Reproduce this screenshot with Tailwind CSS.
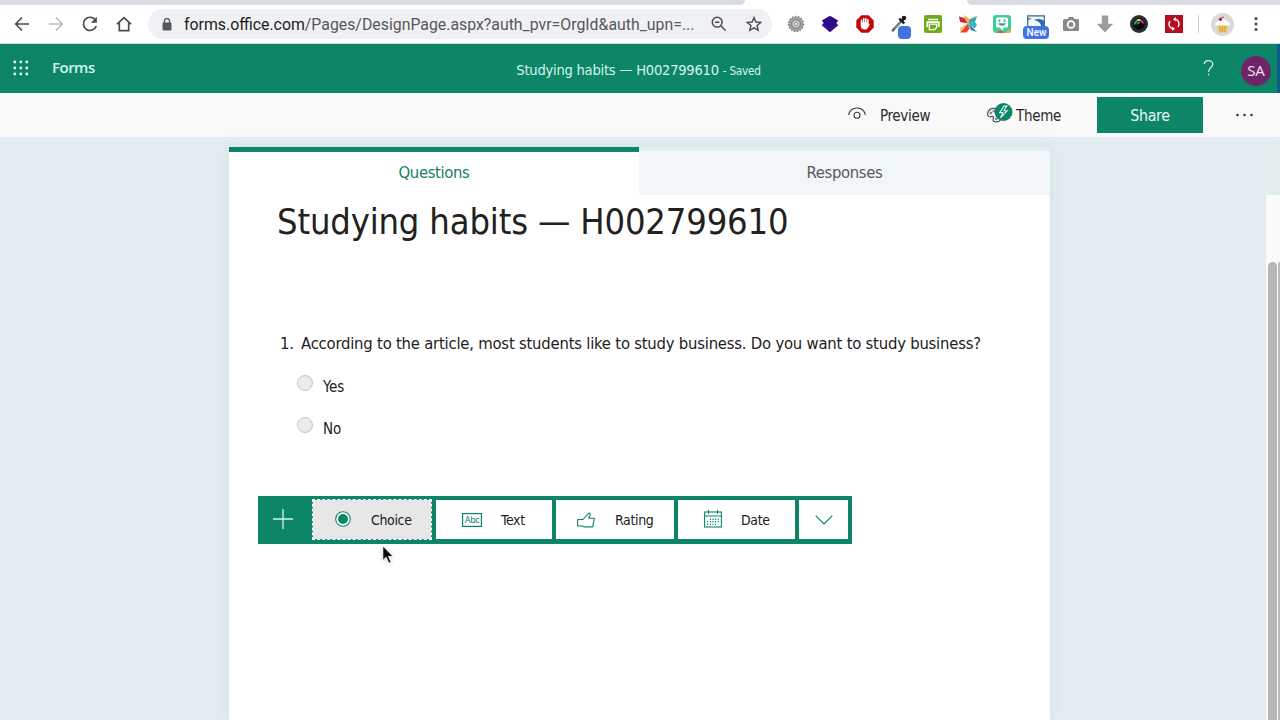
<!DOCTYPE html>
<html lang="en">
<head>
    <meta charset="UTF-8">
    <meta name="viewport" content="width=device-width, initial-scale=1.0">
    <title>Studying habits - Microsoft Forms</title>
    <script src="https://cdn.jsdelivr.net/npm/@tailwindcss/browser@4"></script>
    <style>
        body {
            font-family: 'DejaVu Sans Condensed', 'DejaVu Sans', sans-serif;
        }
    </style>
</head>
<body class="w-[1280px] h-[720px] overflow-hidden flex flex-col bg-[#e4ecf2] text-[#212121]">
    <!-- Browser toolbar -->
    <div class="h-11 shrink-0 bg-white border-b border-[#cfd8d6] flex flex-col">
        <div class="h-[5px] flex justify-between">
            <div class="w-[745px] bg-[#d9dce3] rounded-br-lg"></div>
            <div class="w-[313px] bg-[#d9dce3] rounded-bl-lg"></div>
        </div>
        <div class="flex-1 flex items-center">
            <div class="flex items-center gap-4 pl-[13px]">
                <svg class="w-[18px] h-[18px]" viewBox="0 0 18 18" fill="none" stroke="#4a4c50" stroke-width="1.6"><path d="M16 9H3M9 2.5L2.7 9L9 15.5"/></svg>
                <svg class="w-[18px] h-[18px]" viewBox="0 0 18 18" fill="none" stroke="#b9bbbe" stroke-width="1.5"><path d="M2 9h13M9 2.5L15.3 9L9 15.5"/></svg>
                <svg class="w-[18px] h-[18px]" viewBox="0 0 18 18" fill="none" stroke="#4a4c50" stroke-width="1.7"><path d="M14.7 5.4A6.6 6.6 0 1 0 15.3 11"/><path d="M15.9 1.8v6h-6z" fill="#4a4c50" stroke="none"/></svg>
                <svg class="w-[18px] h-[18px]" viewBox="0 0 18 18" fill="none" stroke="#4a4c50" stroke-width="1.7"><path d="M2 9.2L9 2.6L16 9.2M4.3 8v7.6h9.4V8"/></svg>
            </div>
            <div class="ml-[15px] w-[624px] h-[30px] rounded-full bg-[#f0f1f4] flex items-center" style="font-family: Roboto, sans-serif">
                <svg class="ml-[14px] w-[10px] h-[13px]" viewBox="0 0 10 13"><rect x=".5" y="4.5" width="9" height="8" rx="1" fill="#55585d"/><path d="M2.4 5V3.2a2.6 2.6 0 0 1 5.2 0V5" fill="none" stroke="#55585d" stroke-width="1.4"/></svg>
                <p class="ml-3 w-[520px] pt-px text-[15.85px] text-[#55585d] whitespace-nowrap"><span class="text-[#1b1c1e]">forms.office.com</span>/Pages/DesignPage.aspx?auth_pvr=OrgId&amp;auth_upn=...</p>
                <svg class="ml-[7px] w-4 h-4" viewBox="0 0 16 16" fill="none" stroke="#4a4c50" stroke-width="1.5"><circle cx="6.2" cy="6.2" r="4.9"/><path d="M10 10l4.5 4.5M4 6.2h4.4"/></svg>
                <svg class="ml-[19px] w-4 h-4" viewBox="0 0 16 16" fill="none" stroke="#4a4c50" stroke-width="1.4"><path d="M8 1.6l1.9 4.4 4.8.4-3.6 3.2 1.1 4.7L8 11.8l-4.2 2.5 1.1-4.7L1.3 6.4l4.8-.4z"/></svg>
            </div>

            <!-- Extensions -->
            <div class="ml-[7px] w-[412px] grid grid-cols-12 justify-items-center items-center">
                <svg class="w-[18px] h-[18px]" viewBox="0 0 18 18"><circle cx="9" cy="9" r="7.3" fill="#a5a5a5" stroke="#858585" stroke-width="1.8" stroke-dasharray="1.7 1.3"/><circle cx="9" cy="9" r="4.4" fill="#c9c9c9" stroke="#777"/><circle cx="9" cy="9" r="1.7" fill="#eee" stroke="#808080" stroke-width=".8"/></svg>
                <svg class="w-[18px] h-[18px]" viewBox="0 0 18 18"><path d="M9 .8l8.5 5-1.8 1.3v1.8l1.8 1L9 17.2.5 9.9l1.8-1V7.1L.5 5.8z" fill="#2c0787"/><path d="M2.5 9.5L9 14l6.5-4.5" stroke="#4a25ad" stroke-width=".6" fill="none"/></svg>
                <svg class="w-[18px] h-[18px]" viewBox="0 0 18 18"><path d="M5.4.3h7.2l5.1 5.1v7.2l-5.1 5.1H5.4L.3 12.6V5.4z" fill="#c3060d"/><path d="M5.6 9V5.2M7.7 8.5V3.9M9.8 8.5V3.7M11.9 8.5V4.8" stroke="#fff" stroke-width="1.6" stroke-linecap="round"/><path d="M4.8 7.5v3.3c0 2.5 1.5 3.8 3.8 3.8 2.2 0 3.3-1.1 4.6-3.9.4-.9.5-1.7-.2-1.9-.6-.2-1 .3-1.2.9V7.5z" fill="#fff"/></svg>
                <div class="relative w-[18px] h-[18px]">
                    <svg class="w-[18px] h-[18px]" viewBox="0 0 18 18"><path d="M11 6.5l-6.5 7-2.3 2.8" fill="none" stroke="#456257" stroke-width="2.4"/><path d="M10.5 7l-6 6.5" stroke="#a8bdb5" stroke-width=".8"/><path d="M9.3 3.6l5 4.9M12 6l2.5-3" stroke="#16191b" stroke-width="2.4"/><circle cx="14" cy="3" r="2.3" fill="#16191b"/></svg>
                    <span class="absolute left-2 top-[11px] w-[13px] h-[13px] rounded-sm bg-[#3f73e6]"></span>
                </div>
                <svg class="w-[18px] h-[18px]" viewBox="0 0 18 18"><rect width="18" height="18" rx="2" fill="#70ab1c"/><path d="M4 4.5h10M3.2 12V7.2h11.6V12" fill="none" stroke="#fff" stroke-width="1.7"/><path d="M5.3 9.2h7.4v3.3l-2.2 2.2H5.3z" fill="#70ab1c" stroke="#fff" stroke-width="1.3"/></svg>
                <svg class="w-[18px] h-[18px]" viewBox="0 0 18 18"><path d="M0 1.5l5.5 1.5L9 8.5 1 7z" fill="#cf2546"/><path d="M5 0l6 4.5L9 8.5 5.5 3z" fill="#f0b53a"/><path d="M18 1l-2 6-7 1.5L11 4z" fill="#3fa79f"/><path d="M9 8.5l7-1.5 2 3-2.5 3.5z" fill="#35b6bd"/><path d="M9 8.5L18 17l-6-2z" fill="#2f6fa5"/><path d="M9 8.5l1.5 5.5-3 3.5L1 17.5z" fill="#ea4335"/><path d="M9 8.5L1.5 12.5.5 17z" fill="#f3c63c"/></svg>
                <svg class="w-[18px] h-[18px]" viewBox="0 0 18 18"><rect width="18" height="18" rx="3" fill="#3fcd9a"/><path d="M11 18l7-4v1a3 3 0 0 1-3 3z" fill="#f1a83a"/><path d="M4 17l4-2 3 3H5z" fill="#e3524f"/><path d="M4.5 2.5h9q1.5 0 1.5 1.5v7q0 1.5-1.5 1.5H11L9 15.5 7 12.5H4.5Q3 12.5 3 11V4q0-1.5 1.5-1.5z" fill="#fff"/><path d="M6.5 4.5v2.3M11.5 4.5v2.3" stroke="#27a97c" stroke-width="1.7"/><path d="M5.2 8.3h7.6c-.4 3.3-7.2 3.3-7.6 0z" fill="#27a97c"/></svg>
                <div class="relative w-[18px] h-[18px]">
                    <svg class="w-[18px] h-[18px]" viewBox="0 0 18 18"><path d="M.7 11V.9h16.6V11" fill="#f4f8fb" stroke="#2d6792" stroke-width="1.2"/><path d="M7 5c3-1.5 7-1.5 10 1V11h-3c0-3-3-5-7-6z" fill="#2d6ea5"/><path d="M1 3h4l-4 3z" fill="#5f93b8"/></svg>
                    <span class="absolute -left-1 top-[11px] w-[26px] h-[13px] rounded-sm bg-[#3f73e6] text-white text-[10px] leading-[14px] text-center font-medium" style="font-family: Roboto, sans-serif">New</span>
                </div>
                <svg class="w-[18px] h-[18px]" viewBox="0 0 18 18"><path d="M2.5 4h3l1.3-2h4.4l1.3 2h3A1.5 1.5 0 0 1 17 5.5v9a1.5 1.5 0 0 1-1.5 1.5h-13A1.5 1.5 0 0 1 1 14.5v-9A1.5 1.5 0 0 1 2.5 4z" fill="#87898b"/><circle cx="9" cy="9.5" r="3.4" fill="none" stroke="#fff" stroke-width="1.8"/></svg>
                <svg class="w-[18px] h-[18px]" viewBox="0 0 18 18"><path d="M5.8.5h6.4v8.2h5L9 17.5.8 8.7h5z" fill="#9c9c9c"/></svg>
                <svg class="w-[18px] h-[18px]" viewBox="0 0 18 18"><circle cx="9" cy="9" r="9" fill="#2b2d31"/><circle cx="9" cy="9" r="5.8" fill="#0a0a0c"/><path d="M5.2 9.5A4.2 4.2 0 0 1 7 5.5" stroke="#36b54a" stroke-width="2" fill="none"/><path d="M7 5.5a4 4 0 0 1 3.7-.2" stroke="#e5dc3c" stroke-width="2" fill="none"/><path d="M10.7 5.3a4 4 0 0 1 2.3 3.2" stroke="#d7358b" stroke-width="2" fill="none"/><path d="M7.5 9.5a2 2 0 0 1 2.5-2" stroke="#329fd9" stroke-width="1.3" fill="none"/></svg>
                <svg class="w-[18px] h-[18px]" viewBox="0 0 18 18"><rect width="18" height="18" fill="#b40d20"/><path d="M7.5 13.8A5 5 0 0 1 5 6M10.5 4.2A5 5 0 0 1 13 12" fill="none" stroke="#fff" stroke-width="1.4"/><path d="M10.8 1.9v4.5L8 4.2zM7.2 11.6v4.5L10 13.8z" fill="#fff"/></svg>
            </div>
            <div class="ml-[7px] w-px h-[18px] bg-[#cfd1d4]"></div>
            <svg class="ml-3 w-[23px] h-[23px]" viewBox="0 0 23 23"><circle cx="11.5" cy="11.5" r="11.5" fill="#d9d9d9"/><path d="M6 12h11l-1.8 7.5H7.8z" fill="#f0c25a"/><path d="M8.8 13l.8 6M11.5 13v6M14.2 13l-.8 6" stroke="#d9973a" stroke-width=".8"/><path d="M4.5 12.5c-1-3 1-4 2.5-4.3C8 5.5 14.5 5.3 16 8.2c2 .3 3.5 2 2.5 4.3z" fill="#fffdf8"/><circle cx="9.5" cy="6.3" r="1.6" fill="#a51e2b"/><path d="M9.8 5.5c1-1.3 2-1.3 3.2-1.3" stroke="#8d2530" stroke-width=".8" fill="none"/></svg>
            <svg class="ml-5 w-1 h-4" viewBox="0 0 4 16" fill="#4a4c50"><circle cx="2" cy="2.5" r="1.6"/><circle cx="2" cy="8" r="1.6"/><circle cx="2" cy="13.5" r="1.6"/></svg>
        </div>
    </div>

    <!-- Forms header -->
    <header class="h-[49px] shrink-0 bg-[#0d8567] text-[#d5f5ec] border-r-[3px] border-[#0b5e87] flex items-center">
        <div class="flex-1 flex items-center">
            <svg class="ml-[13px] -mt-0.5 w-4 h-4" viewBox="0 0 16 16" fill="#e4fbf4"><circle cx="1.8" cy="2" r="1.4"/><circle cx="7.8" cy="2" r="1.4"/><circle cx="13.8" cy="2" r="1.4"/><circle cx="1.8" cy="8" r="1.4"/><circle cx="7.8" cy="8" r="1.4"/><circle cx="13.8" cy="8" r="1.4"/><circle cx="1.8" cy="14" r="1.4"/><circle cx="7.8" cy="14" r="1.4"/><circle cx="13.8" cy="14" r="1.4"/></svg>
            <span class="ml-[23px] -mt-0.5 text-[15px] tracking-[-0.5px] font-semibold" style="font-family: 'Open Sans', sans-serif">Forms</span>
        </div>
        <p class="text-[14.6px] tracking-[-0.24px] whitespace-nowrap pt-0.5">Studying habits — H002799610 <span class="text-[11.7px]">- Saved</span></p>
        <div class="flex-1 flex items-center justify-end">
            <svg class="mr-[27px] -mt-0.5 w-[11px] h-4" viewBox="0 0 11 16" fill="none" stroke="#d5f5ec" stroke-width="1.2"><path d="M1.2 4.2C1.5 2 3.3.7 5.5.7c2.5 0 4.3 1.4 4.3 3.6C9.8 7.5 5.5 7.6 5.5 12"/><path d="M5.5 13.8v1.6"/></svg>
            <div class="mr-1.5 mt-1 w-[30px] h-[30px] rounded-full bg-[#6f2468] text-[#f1dff0] text-[15px] tracking-[-0.2px] flex items-center justify-center" style="font-family: 'Noto Sans', sans-serif">SA</div>
        </div>
    </header>

    <!-- Command bar -->
    <div class="h-11 shrink-0 bg-[#f9f9f9] flex items-center justify-end text-[15px] tracking-[-0.33px] text-[#2b2b2b]">
        <div class="flex items-center">
            <svg class="-mt-1 w-[18px] h-[13px]" viewBox="0 0 18 13" fill="none" stroke="#3b3b3b" stroke-width="1.1"><path d="M.6 8C1.5 3.6 4.8 1 9 1s7.5 2.6 8.4 7"/><circle cx="9" cy="8.3" r="3"/></svg>
            <span class="ml-3.5 mt-0.5">Preview</span>
        </div>
        <div class="ml-[57px] flex items-center">
            <svg class="-mt-0.5 w-[26px] h-[22px]" viewBox="0 0 26 22"><path d="M9 5.5C4 4.5.6 7.5.6 11c0 2.5 2 3.6 3.9 2.6 1.6-.9 2.5.2 1.7 2-.8 2 .9 3.4 3 3.4 2.3 0 3.8-1 4.8-2.5" fill="none" stroke="#3b3b3b" stroke-width="1.1"/><circle cx="3.8" cy="10" r="1" fill="none" stroke="#3b3b3b" stroke-width=".7"/><circle cx="6.8" cy="8" r="1" fill="none" stroke="#3b3b3b" stroke-width=".7"/><circle cx="9.3" cy="15.8" r="1" fill="none" stroke="#3b3b3b" stroke-width=".7"/><circle cx="16.5" cy="9" r="9" fill="#0d8567"/><path d="M17 3.1l-4.3 6.5h3.1l-2.3 5.2 6.7-7.1h-3.3l3-4.6z" fill="none" stroke="#d9f7ee" stroke-width="1.1"/></svg>
            <span class="ml-[3px] mt-0.5">Theme</span>
        </div>
        <button class="ml-9 -mt-px w-[106px] h-9 pt-0.5 bg-[#0d8567] text-[#e6fbf5] text-[15.8px] tracking-[-0.3px]">Share</button>
        <svg class="ml-[33px] mr-[27px] w-[17px] h-1" viewBox="0 0 17 4" fill="#222"><circle cx="1.5" cy="2" r="1.2"/><circle cx="8.5" cy="2" r="1.2"/><circle cx="15.5" cy="2" r="1.2"/></svg>
    </div>

    <!-- Form canvas -->
    <main class="flex-1 min-h-0 flex justify-between">
        <section class="ml-[229px] mt-2.5 w-[821px] flex flex-col shadow-[0_0_12px_rgba(190,222,215,0.65)]">
            <div class="h-12 shrink-0 flex text-[16.5px] tracking-[-0.35px]">
                <div class="w-[410px] bg-white border-t-[5px] border-[#0d8567] text-[#14805f] flex items-center justify-center">Questions</div>
                <div class="mt-1 flex-1 bg-[#f1f6f9] text-[#54595c] flex items-center justify-center pt-px">Responses</div>
            </div>
            <div class="flex-1 bg-white pl-12">
                <h1 class="pt-1.5 text-4xl leading-[42px] tracking-[-0.17px] text-[#212121]">Studying habits — H002799610</h1>

                <div class="mt-[89px] flex text-[16.5px] tracking-[-0.215px] leading-6">
                    <span class="w-[24px] pl-[3px]">1.</span>
                    <p>According to the article, most students like to study business. Do you want to study business?</p>
                </div>
                <div class="mt-[17px] ml-5 flex flex-col gap-[18px] text-[15px] tracking-[-0.2px] leading-6">
                    <label class="flex gap-2.5"><span class="mt-0.5 w-4 h-4 rounded-full border border-[#c6c6c6] bg-[#ebebeb]"></span><span class="mt-0.5 -mb-0.5">Yes</span></label>
                    <label class="flex gap-2.5"><span class="mt-0.5 w-4 h-4 rounded-full border border-[#c6c6c6] bg-[#ebebeb]"></span><span class="mt-0.5 -mb-0.5">No</span></label>
                </div>

                <!-- Question type picker -->
                <div class="relative mt-[57px] -ml-[19px] w-[594px] h-12 bg-[#0d8567] p-1 pb-[5px] flex gap-1 text-[14px] tracking-[-0.35px]">
                    <div class="w-[46px] pr-1 flex items-center justify-center">
                        <svg class="w-5 h-5 -mt-px" viewBox="0 0 20 20" stroke="#d5f5ec" stroke-width="1.3"><path d="M10 0v20M0 10h20"/></svg>
                    </div>
                    <div class="-my-px w-[120px] bg-[#e7e7e7] bg-clip-padding border border-dashed border-white flex items-center">
                        <svg class="ml-[22px] -mt-px w-4 h-4" viewBox="0 0 16 16"><circle cx="8" cy="8" r="7.3" fill="#fff" stroke="#0d8567" stroke-width="1.1"/><circle cx="8" cy="8" r="5" fill="#0d8567"/></svg>
                        <span class="ml-5 pt-px">Choice</span>
                    </div>
                    <div class="w-[116px] bg-white flex items-center">
                        <svg class="ml-[26px] w-5 h-3.5" viewBox="0 0 20 14"><rect x=".6" y=".6" width="18.8" height="12.8" fill="#fff" stroke="#0d8567" stroke-width="1.2"/><text x="10" y="10.3" text-anchor="middle" textLength="14.5" lengthAdjust="spacingAndGlyphs" font-size="8.5" font-family="Noto Sans" fill="#0d8567">Abc</text></svg>
                        <span class="ml-[19px] pt-px">Text</span>
                    </div>
                    <div class="w-[118px] bg-white flex items-center">
                        <svg class="ml-[21px] w-[18px] h-4" viewBox="0 0 18 16" fill="none" stroke="#0d8567" stroke-width="1.1"><path d="M.6 7.5H6l5.2-5.8c.8-1 2.5-.4 2 1.2L11.8 6.3h5.5l-1.6 8.6H7.2L5.5 14H.6z" stroke-linejoin="round"/></svg>
                        <span class="ml-5 pt-px">Rating</span>
                    </div>
                    <div class="w-[117px] bg-white flex items-center">
                        <svg class="ml-[26px] -mt-0.5 w-[18px] h-[18px]" viewBox="0 0 18 18" fill="none" stroke="#0d8567" stroke-width="1.1"><rect x=".6" y="2" width="16.8" height="15"/><path d="M.6 6h16.8M4.5 0v4M13.5 0v4"/><path d="M6.5 8.5v7M9 8.5v7M11.5 8.5v7M14.3 8.5v5M3.7 10.7v5" stroke-dasharray="1.4 1.2"/></svg>
                        <span class="ml-[19px] pt-px">Date</span>
                    </div>
                    <div class="w-[49px] bg-white flex items-center justify-center">
                        <svg class="w-[18px] h-[10px]" viewBox="0 0 18 10" fill="none" stroke="#0d8567" stroke-width="1.2"><path d="M.7.7L9 9 17.3.7"/></svg>
                    </div>
                    <!-- Mouse pointer -->
                    <svg class="absolute left-[124px] top-[49px] w-[12px] h-[20px] drop-shadow-sm" viewBox="0 0 12 20"><path d="M.8 1v14.5l3.4-3.2 2.6 6 2.4-1-2.6-5.9h4.6z" fill="#0b0b0b" stroke="#fff" stroke-width=".9"/></svg>
                </div>
            </div>
        </section>

        <!-- Scrollbar -->
        <div class="w-[15px] flex flex-col">
            <div class="h-[58px] shrink-0 self-end w-[5px] bg-[#dfeeea]"></div>
            <div class="flex-1 bg-[#fafafa] border-l border-[#e6e6e6] pt-[67px] flex">
                <div class="ml-0.5 w-[9px] bg-[#b6b6b6] rounded-t-full"></div>
                <div class="ml-px flex-1 bg-[#bcbcbc] rounded-tl-sm"></div>
            </div>
        </div>
    </main>
</body>
</html>
